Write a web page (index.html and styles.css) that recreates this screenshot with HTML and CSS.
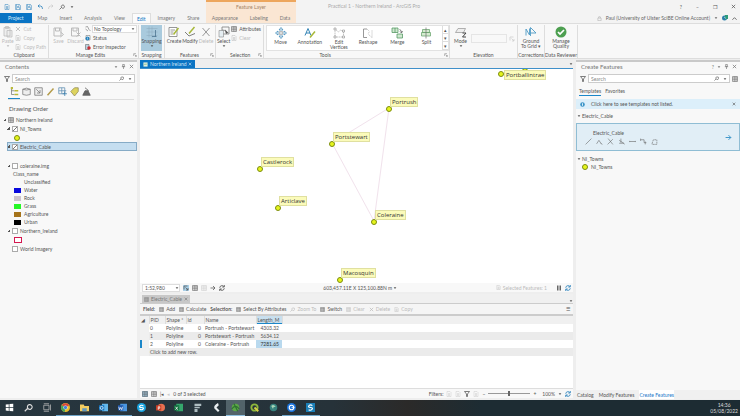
FILE: index.html
```html
<!DOCTYPE html>
<html lang="en">
<head>
    <meta charset="UTF-8">
    <meta name="viewport" content="width=device-width, initial-scale=1.0">
    <title>Practical 1 - Northern Ireland - ArcGIS Pro</title>
    <link rel="stylesheet" href="styles.css">
</head>
<body>

    <!-- Shared icons -->
    <svg class="defs">
        <symbol id="page" viewBox="0 0 12 12"><path d="M2 1h6l2 2v8H2zM4 5h4M4 7h4M4 9h4" fill="none" stroke="currentColor"/></symbol>
        <symbol id="disk" viewBox="0 0 12 12"><path d="M1 1h8l2 2v8H1zM3 1v4h5V1M3 11V7h6v4" fill="none" stroke="currentColor"/></symbol>
        <symbol id="grid" viewBox="0 0 12 12"><path d="M1 1h10v10H1zM1 4h10M1 7.500h10M4.500 1v10M8 1v10" fill="none" stroke="currentColor"/></symbol>
        <symbol id="filter" viewBox="0 0 12 12"><path d="M1 1h10L7 6v5H5V6z" fill="none" stroke="currentColor" stroke-width="1.500"/></symbol>
        <symbol id="lens" viewBox="0 0 12 12"><path d="M1 11l4-4M5 7a3.200 3.200 0 1 1 1 1z" fill="none" stroke="currentColor" stroke-width="1.500"/></symbol>
        <symbol id="refresh" viewBox="0 0 12 12"><path d="M1.500 5.500a4.500 4.500 0 0 1 8-2.500M10.500 6.500a4.500 4.500 0 0 1-8 2.500M10.500 0v4h-4M1.500 12V8h4" fill="none" stroke="currentColor" stroke-width="1.800"/></symbol>
        <symbol id="launch" viewBox="0 0 12 12"><path d="M2 9V2h7M5 5l5 5M10 6v4H6" fill="none" stroke="currentColor" stroke-width="1.500"/></symbol>
        <symbol id="cross" viewBox="0 0 12 12"><path d="M2 2l8 8M10 2l-8 8" stroke="currentColor" stroke-width="1.800"/></symbol>
        <symbol id="pin" viewBox="0 0 12 12"><path d="M4 1h4v5H4zM2 6.500h8M6 7v5" fill="none" stroke="currentColor" stroke-width="1.600"/></symbol>
        <symbol id="down" viewBox="0 0 12 12"><path d="M2 4h8l-4 5z" fill="currentColor"/></symbol>
        <symbol id="arrow" viewBox="0 0 12 12"><path d="M1 6h9M6 2l4 4-4 4" fill="none" stroke="currentColor" stroke-width="1.500"/></symbol>
    </svg>

    <div class="app">
        <header class="titlebar">
            <div class="quick">
                <svg class="icon blue"><use href="#page"/></svg>
                <svg class="icon blue"><use href="#disk"/></svg>
                <svg class="icon blue"><use href="#disk"/></svg>
                <svg class="icon blue" viewBox="0 0 12 12"><path d="M5 1L2 4l3 3M2 4h5q4 0 4 6" fill="none" stroke="currentColor" stroke-width="1.600"/></svg>
                <svg class="icon pale" viewBox="0 0 12 12"><path d="M7 1l3 3-3 3M10 4H5Q1 4 1 10" fill="none" stroke="currentColor" stroke-width="1.600"/></svg>
                <svg class="icon"><use href="#lens"/></svg>
                <svg class="tiny"><use href="#down"/></svg>
            </div>
            <div class="context">Feature Layer</div>
            <h1 class="title">Practical 1 - Northern Ireland - ArcGIS Pro</h1>
            <div class="window-buttons">
                <button>?</button>
                <button>–</button>
                <button>❐</button>
                <button aria-label="Close"><svg class="small"><use href="#cross"/></svg></button>
            </div>
        </header>

        <nav class="tabs">
            <div class="main-tabs">
                <button class="project">Project</button>
                <button>Map</button>
                <button>Insert</button>
                <button>Analysis</button>
                <button>View</button>
                <button class="current">Edit</button>
                <button>Imagery</button>
                <button>Share</button>
            </div>
            <div class="context-tabs">
                <button>Appearance</button>
                <button>Labeling</button>
                <button>Data</button>
            </div>
            <div class="account">
                <svg class="small" viewBox="0 0 12 12"><path d="M2 5h8v6H2zM4 5V2q2-2 4 0v3" fill="none" stroke="#999"/></svg>
                <span>Paul (University of Ulster SciBE Online Account)</span>
                <svg class="tiny"><use href="#down"/></svg>
                <svg class="icon" viewBox="0 0 12 12"><circle cx="5" cy="6" r="5" fill="#2a7fa8"/><path d="M6 0h6v8H6z" fill="#2c9b7a"/><path d="M4 4l4 3" stroke="#fff"/></svg>
                <svg class="small" viewBox="0 0 12 12"><path d="M1 9l5-5 5 5" fill="none" stroke="#555" stroke-width="2"/></svg>
            </div>
        </nav>

        <section class="ribbon">
            <div class="group clipboard">
                <div class="tools faded">
                    <button class="big">
                        <svg viewBox="0 0 24 24"><path d="M4 3h12v17H4zM7 1h6v4H7zM10 9h10v13H10z" fill="#eee" stroke="#bbb" stroke-width="1.500"/></svg>
                        Paste<svg class="tiny"><use href="#down"/></svg>
                    </button>
                    <div class="stack">
                        <button><svg class="icon"><use href="#cross"/></svg>Cut</button>
                        <button><svg class="icon"><use href="#page"/></svg>Copy</button>
                        <button><svg class="icon"><use href="#page"/></svg>Copy Path</button>
                    </div>
                </div>
                <div class="caption">Clipboard</div>
            </div>
            <div class="group manage">
                <div class="tools">
                    <button class="big faded">
                        <svg viewBox="0 0 24 24"><path d="M2 4h14v16H2zM5 4v6h8V4M15 12l6 5-6 5" fill="none" stroke="#bbb" stroke-width="2"/></svg>
                        Save
                    </button>
                    <button class="big faded">
                        <svg viewBox="0 0 24 24"><path d="M3 4h14v16H3zM6 4v6h8V4M13 13l8 8M21 13l-8 8" fill="none" stroke="#bbb" stroke-width="2"/></svg>
                        Discard
                    </button>
                    <div class="stack">
                        <div class="topology">
                            <svg class="icon" viewBox="0 0 12 12"><path d="M1 2l4-1 3 6 3 3M1 6l5 4" fill="none" stroke="#555"/></svg>
                            <div class="drop">
                                <select aria-label="Topology"><option>No Topology</option></select>
                                <svg class="tiny"><use href="#down"/></svg>
                            </div>
                        </div>
                        <button><svg class="icon" viewBox="0 0 12 12"><path d="M2 1h8v9H2z" fill="#fff" stroke="#666"/><circle cx="5" cy="7" r="4" fill="#2683bd"/><path d="M5 5v4" stroke="#fff"/></svg>Status</button>
                        <button><svg class="icon" viewBox="0 0 12 12"><path d="M1 1h7v10H1z" fill="#b9d2e0" stroke="#555"/><circle cx="8" cy="8" r="3.500" fill="#c62f35"/></svg>Error Inspector</button>
                    </div>
                </div>
                <div class="caption">Manage Edits<svg class="launch"><use href="#launch"/></svg></div>
            </div>
            <div class="group snap">
                <div class="tools">
                    <button class="big pressed">
                        <svg viewBox="0 0 24 24"><path d="M1 5h22M1 12h22M1 19h22M6 1v22M12 1v22" stroke="#8daabd"/><path d="M19 8v13M12 21h9" stroke="#476f8b" stroke-width="1.500"/></svg>
                        Snapping<svg class="tiny"><use href="#down"/></svg>
                    </button>
                </div>
                <div class="caption">Snapping</div>
            </div>
            <div class="group features">
                <div class="tools">
                    <button class="big">
                        <svg viewBox="0 0 24 24"><path d="M2 3h16v18H2zM5 8h9M5 12h6M5 16h5" fill="#fff" stroke="#777" stroke-width="1.500"/><path d="M11 17L21 4" stroke="#a7b83a" stroke-width="3"/></svg>
                        Create
                    </button>
                    <button class="big">
                        <svg viewBox="0 0 24 24"><path d="M2 12l8 8 12-5" fill="none" stroke="#555" stroke-width="1.500"/><path d="M10 15L21 2" stroke="#a7b83a" stroke-width="3"/></svg>
                        Modify
                    </button>
                    <button class="big faded">
                        <svg viewBox="0 0 24 24"><path d="M5 4l14 16M19 4L5 20" stroke="#999" stroke-width="2"/></svg>
                        Delete
                    </button>
                </div>
                <div class="caption">Features<svg class="launch"><use href="#launch"/></svg></div>
            </div>
            <div class="group selection">
                <div class="tools">
                    <button class="big">
                        <svg viewBox="0 0 24 24"><path d="M8 2h14v14H8zM8 8l7 1 2 7" fill="none" stroke="#777" stroke-width="1.500"/><path d="M2 9v13h9V9z" fill="#e6eef2" stroke="#777"/><path d="M14 7l7 7-5 1z" fill="#555"/></svg>
                        Select<svg class="tiny"><use href="#down"/></svg>
                    </button>
                    <div class="stack">
                        <button><svg class="icon"><use href="#grid"/></svg>Attributes</button>
                        <button class="faded"><svg class="icon"><use href="#page"/></svg>Clear</button>
                    </div>
                </div>
                <div class="caption">Selection<svg class="launch"><use href="#launch"/></svg></div>
            </div>
            <div class="group toolset">
                <div class="tools gallery">
                    <button class="big">
                        <svg viewBox="0 0 24 24"><path d="M12 1l4 5H8zM12 23l4-5H8zM1 12l5-4v8zM23 12l-5-4v8z" fill="#fff" stroke="#3384b5" stroke-width="1.500"/><path d="M9 9h6v6H9z" fill="#ddd" stroke="#888"/></svg>
                        Move
                    </button>
                    <button class="big">
                        <svg viewBox="0 0 24 24"><path d="M2 17L8 3l6 14M4 12h8" fill="none" stroke="#3384b5" stroke-width="2"/><path d="M12 21L22 9" stroke="#a7b83a" stroke-width="3"/></svg>
                        Annotation
                    </button>
                    <button class="big">
                        <svg viewBox="0 0 24 24"><path d="M4 4v16h17V9l-6-3-4 4-7-6" fill="none" stroke="#888" stroke-dasharray="3 1"/><path d="M2 2h4v4H2zM2 18h4v4H2zM19 18h4v4h-4zM19 6h4v4h-4z" fill="#fff" stroke="#777"/></svg>
                        Edit<br>Vertices
                    </button>
                    <button class="big">
                        <svg viewBox="0 0 24 24"><path d="M10 4H3v17h7" fill="none" stroke="#777" stroke-width="1.500"/><path d="M10 4l5 5-3 5 8 7M20 7v14" fill="none" stroke="#777" stroke-dasharray="2 2"/></svg>
                        Reshape
                    </button>
                    <button class="big">
                        <svg viewBox="0 0 24 24"><path d="M2 2h12v9H2zM8 2v9M12 14h11v8H12z" fill="#cfe8cf" stroke="#519560" stroke-width="1.500"/><path d="M17 5q4 1 4 6m-3-2l3 3 2-4" fill="none" stroke="#555" stroke-width="1.500"/></svg>
                        Merge
                    </button>
                    <button class="big">
                        <svg viewBox="0 0 24 24"><path d="M5 5h14v6H5zM3 11h18v7H3z" fill="#d5ebcf" stroke="#69a46e" stroke-width="1.500"/><path d="M12 1v22" stroke="#777" stroke-width="1.500"/></svg>
                        Split
                    </button>
                    <div class="scroller">
                        <button aria-label="Up">▴</button>
                        <button aria-label="Down">▾</button>
                        <button aria-label="More">▾</button>
                    </div>
                </div>
                <div class="caption">Tools<svg class="launch"><use href="#launch"/></svg></div>
            </div>
            <div class="group elevation">
                <div class="tools">
                    <button class="big">
                        <svg viewBox="0 0 24 24"><path d="M1 13L6 5h15l-4 8z" fill="#eee" stroke="#999" stroke-width="1.500"/><path d="M15 14h7l-7 8h7" fill="none" stroke="#444" stroke-width="2"/></svg>
                        Mode<svg class="tiny"><use href="#down"/></svg>
                    </button>
                    <select class="surface" aria-label="Elevation surface" disabled><option></option></select>
                    <svg class="icon pale"><use href="#launch"/></svg>
                </div>
                <div class="caption">Elevation</div>
            </div>
            <div class="group corrections">
                <div class="tools">
                    <button class="big">
                        <svg viewBox="0 0 24 24"><path d="M2 19V6l7 12V5M11 20V3l11 11H11" fill="none" stroke="#4f9bc5" stroke-width="1.800"/></svg>
                        Ground<br>To Grid ▾
                    </button>
                </div>
                <div class="caption">Corrections</div>
            </div>
            <div class="group reviewer">
                <div class="tools">
                    <button class="big">
                        <svg viewBox="0 0 24 24"><circle cx="12" cy="12" r="11" fill="#4d9f50"/><path d="M6 12l4 4 8-8" fill="none" stroke="#fff" stroke-width="3.500"/></svg>
                        Manage<br>Quality
                    </button>
                </div>
                <div class="caption">Data Reviewer</div>
            </div>
        </section>

        <main class="workspace">
            <aside class="pane contents">
                <div class="pane-head">
                    <h2>Contents</h2>
                    <svg class="tiny"><use href="#down"/></svg>
                    <svg class="small"><use href="#pin"/></svg>
                    <svg class="small"><use href="#cross"/></svg>
                </div>
                <div class="search">
                    <svg class="icon"><use href="#filter"/></svg>
                    <label class="field"><input type="text" placeholder="Search" aria-label="Search contents"><svg class="small"><use href="#lens"/></svg><svg class="tiny"><use href="#down"/></svg></label>
                </div>
                <div class="list-modes">
                    <button class="on" aria-label="Drawing order"><svg viewBox="0 0 12 12"><path d="M2 1v9h4M2 5h4" fill="none" stroke="#777"/><path d="M1 0h3v3H1zM6 4h5v2H6zM6 9h5v2H6z" fill="#b9b93a"/></svg></button>
                    <button aria-label="Source"><svg viewBox="0 0 12 12"><path d="M1 3v7q5 2 10 0V3M1 3q5-3 10 0-5 2-10 0" fill="#eee" stroke="#777"/></svg></button>
                    <button aria-label="Selection"><svg viewBox="0 0 12 12"><path d="M1 1h10v10H1zM3 3l5 5M8 4v4H4" fill="#eee" stroke="#777"/></svg></button>
                    <button aria-label="Editing"><svg viewBox="0 0 12 12"><path d="M2 11l8-9" stroke="#b49c4b" stroke-width="2"/></svg></button>
                    <button aria-label="Snapping"><svg viewBox="0 0 12 12"><path d="M1 1h8v8H1zM1 5h10M5 1v8" fill="none" stroke="#5d8db0"/><path d="M9 6v6M6 9h6" stroke="#3379aa"/></svg></button>
                    <button aria-label="Labeling"><svg viewBox="0 0 12 12"><path d="M1 6l5-5h5v5l-5 6z" fill="#ddd35e" stroke="#8f8a58"/></svg></button>
                    <button aria-label="Perspective"><svg viewBox="0 0 12 12"><path d="M1 11l3-6h4l3 6zM4 1l5 4" fill="#666" stroke="#555"/></svg></button>
                </div>
                <h3>Drawing Order</h3>
                <ul class="tree">
                    <li class="root"><i class="twist"></i><svg class="icon"><use href="#grid"/></svg>Northern Ireland</li>
                    <li><label><i class="twist"></i><input type="checkbox" checked>NI_Towns</label></li>
                    <li class="symbol"><i class="dot"></i></li>
                    <li class="selected"><label><i class="twist"></i><input type="checkbox" checked>Electric_Cable</label></li>
                    <li class="symbol blank"></li>
                    <li><label><i class="twist"></i><input type="checkbox">coleraine.img</label></li>
                    <li class="class-name">Class_name</li>
                    <li class="class"><i class="swatch"></i>Unclassified</li>
                    <li class="class"><i class="swatch water"></i>Water</li>
                    <li class="class"><i class="swatch rock"></i>Rock</li>
                    <li class="class"><i class="swatch grass"></i>Grass</li>
                    <li class="class"><i class="swatch agriculture"></i>Agriculture</li>
                    <li class="class"><i class="swatch urban"></i>Urban</li>
                    <li><label><i class="twist"></i><input type="checkbox">Northern_Ireland</label></li>
                    <li class="symbol"><i class="outline"></i></li>
                    <li><label><i class="twist none"></i><input type="checkbox">World Imagery</label></li>
                </ul>
            </aside>

            <div class="center">
                <section class="map-view">
                    <div class="view-tabs">
                        <button><svg class="small" viewBox="0 0 12 12"><path d="M1 1h10v10H1z" fill="#e3f0dc"/><path d="M2 8l3-4 2 3 3-4" fill="none" stroke="#4b9b6b"/></svg>Northern Ireland<svg class="tiny"><use href="#cross"/></svg></button>
                        <svg class="tiny"><use href="#down"/></svg>
                    </div>
                    <div class="map">
                        <svg class="cables"><path d="M249 39L192 74L234 152Z" fill="none" stroke="#f1e2ec"/></svg>
                        <div class="town bare"><i class="dot"></i></div>
                        <div class="town portballintrae"><i class="dot"></i><span>Portballintrae</span></div>
                        <div class="town portrush"><i class="dot"></i><span>Portrush</span></div>
                        <div class="town portstewart"><i class="dot"></i><span>Portstewart</span></div>
                        <div class="town castlerock"><i class="dot"></i><span>Castlerock</span></div>
                        <div class="town articlave"><i class="dot"></i><span>Articlave</span></div>
                        <div class="town coleraine"><i class="dot"></i><span>Coleraine</span></div>
                        <div class="town macosquin"><i class="dot"></i><span>Macosquin</span></div>
                    </div>
                    <div class="map-status">
                        <div class="drop">
                            <select aria-label="Map scale"><option>1:52,980</option></select>
                            <svg class="tiny"><use href="#down"/></svg>
                        </div>
                        <svg class="icon lit"><use href="#launch"/></svg>
                        <svg class="icon"><use href="#grid"/></svg>
                        <svg class="icon pale"><use href="#grid"/></svg>
                        <svg class="icon"><use href="#arrow"/></svg>
                        <svg class="icon"><use href="#refresh"/></svg>
                        <span class="coords">603,457.11E X 125,100.88N m <svg class="tiny"><use href="#down"/></svg></span>
                        <span class="selected-count"><svg class="small"><use href="#page"/></svg>Selected Features: 1</span>
                        <svg class="icon" viewBox="0 0 12 12"><path d="M2 1h3v10H2zM7 1h3v10H7z" fill="#666"/></svg>
                        <svg class="icon blue"><use href="#refresh"/></svg>
                    </div>
                </section>

                <section class="table-view">
                    <div class="table-tabs">
                        <button><svg class="small"><use href="#grid"/></svg>Electric_Cable<svg class="tiny"><use href="#cross"/></svg></button>
                        <svg class="tiny"><use href="#down"/></svg>
                    </div>
                    <div class="table-tools">
                        <b>Field:</b>
                        <button><svg class="small"><use href="#grid"/></svg>Add</button>
                        <button><svg class="small"><use href="#grid"/></svg>Calculate</button>
                        <b>Selection:</b>
                        <button><svg class="small"><use href="#grid"/></svg>Select By Attributes</button>
                        <button class="faded"><svg class="small"><use href="#lens"/></svg>Zoom To</button>
                        <button><svg class="small"><use href="#grid"/></svg>Switch</button>
                        <button class="faded"><svg class="small"><use href="#grid"/></svg>Clear</button>
                        <button class="faded"><svg class="small"><use href="#cross"/></svg>Delete</button>
                        <button class="faded"><svg class="small"><use href="#page"/></svg>Copy</button>
                        <button class="menu" aria-label="Menu">☰</button>
                    </div>
                    <table>
                        <thead>
                            <tr>
                                <th class="c-mark">◢</th>
                                <th class="c-pid">PID</th>
                                <th class="c-shape">Shape *</th>
                                <th class="c-id">Id</th>
                                <th class="c-name">Name</th>
                                <th class="c-length">Length_M</th>
                                <th></th>
                            </tr>
                        </thead>
                        <tbody>
                            <tr><td></td><td>0</td><td>Polyline</td><td class="num">0</td><td>Portrush - Portstewart</td><td class="num">4303.32</td><td></td></tr>
                            <tr><td></td><td>1</td><td>Polyline</td><td class="num">0</td><td>Portstewart - Portrush</td><td class="num">5634.12</td><td></td></tr>
                            <tr class="active"><td></td><td>2</td><td>Polyline</td><td class="num">0</td><td>Coleraine - Portrush</td><td class="num">7281.65</td><td></td></tr>
                            <tr><td></td><td colspan="6">Click to add new row.</td></tr>
                        </tbody>
                    </table>
                    <div class="table-status">
                        <svg class="icon lit"><use href="#grid"/></svg>
                        <svg class="icon"><use href="#grid"/></svg>
                        <span class="nav">|◂</span>
                        <span class="nav pale">◂</span>
                        <span>0 of 3 selected</span>
                        <span class="filters">Filters:</span>
                        <svg class="icon pale"><use href="#page"/></svg>
                        <svg class="icon pale"><use href="#page"/></svg>
                        <svg class="icon"><use href="#filter"/></svg>
                        <svg class="icon pale"><use href="#page"/></svg>
                        <span>−</span>
                        <input type="range" aria-label="Zoom">
                        <span>+</span>
                        <span class="percent">100%</span>
                        <svg class="tiny"><use href="#down"/></svg>
                        <svg class="icon blue"><use href="#refresh"/></svg>
                    </div>
                </section>
            </div>

            <aside class="pane create">
                <div class="pane-head">
                    <h2>Create Features</h2>
                    <span>?</span>
                    <svg class="tiny"><use href="#down"/></svg>
                    <svg class="small"><use href="#pin"/></svg>
                    <svg class="small"><use href="#cross"/></svg>
                </div>
                <div class="search">
                    <svg class="icon"><use href="#filter"/></svg>
                    <label class="field"><input type="text" placeholder="Search" aria-label="Search templates"><svg class="small"><use href="#lens"/></svg><svg class="tiny"><use href="#down"/></svg></label>
                    <svg class="icon"><use href="#grid"/></svg>
                </div>
                <div class="pane-tabs">
                    <button class="on">Templates</button>
                    <button>Favorites</button>
                </div>
                <div class="notice">
                    <svg class="small" viewBox="0 0 12 12"><circle cx="6" cy="6" r="5.500" fill="#3b95c8"/><path d="M6 3v6" stroke="#fff" stroke-width="2"/></svg>
                    <a href="#">Click here to see templates not listed.</a>
                    <svg class="tiny"><use href="#cross"/></svg>
                </div>
                <div class="heading"><svg class="tiny"><use href="#down"/></svg>Electric_Cable</div>
                <div class="template">
                    <div class="template-body">
                        <div class="template-name">Electric_Cable</div>
                        <div class="template-tools">
                            <button aria-label="Line"><svg viewBox="0 0 12 12"><path d="M1 11L11 1"/></svg></button>
                            <button aria-label="Trace"><svg viewBox="0 0 12 12"><path d="M1 10l4-6 4 6M8 9l3 2"/></svg></button>
                            <button aria-label="Split"><svg viewBox="0 0 12 12"><path d="M2 1l8 10M10 2L1 11"/></svg></button>
                            <button aria-label="Radial"><svg viewBox="0 0 12 12"><path d="M5 1v7M2 4l8 5M2 9h8l1 2"/></svg></button>
                            <button aria-label="Two-point line"><svg viewBox="0 0 12 12"><path d="M1 6h10M1 5v2M11 5v2"/></svg></button>
                            <button aria-label="Right angle"><svg viewBox="0 0 12 12"><path d="M1 3h6v5h4M1 1v4M9 6v5"/></svg></button>
                            <button aria-label="Polygon"><svg viewBox="0 0 12 12"><path d="M2 9l2-6h6v8H2z" stroke-dasharray="3 1"/></svg></button>
                        </div>
                    </div>
                    <button class="go" aria-label="Open template"><svg><use href="#arrow"/></svg></button>
                </div>
                <div class="heading"><svg class="tiny"><use href="#down"/></svg>NI_Towns</div>
                <div class="point-template"><i class="dot"></i>NI_Towns</div>
                <div class="dock-tabs">
                    <button>Catalog</button>
                    <button>Modify Features</button>
                    <button class="on">Create Features</button>
                </div>
            </aside>
        </main>

        <footer class="taskbar">
            <div class="apps">
                <div><svg viewBox="0 0 12 12"><path d="M1 2l4-.5v4H1zM6 1.300L11 1v4.500H6zM1 6.500h4v4L1 10zM6 6.500h5V11l-5-.5z" fill="#fff"/></svg></div>
                <div><svg><use href="#lens"/></svg></div>
                <div><svg viewBox="0 0 12 12"><path d="M1 3h7v6H1zM10 2v8M1 1h7M1 11h7" fill="none" stroke="#bbb"/></svg></div>
                <div class="open"><svg viewBox="0 0 12 12"><circle cx="6" cy="6" r="6" fill="#e7bc2d"/><path d="M6 6L1 3a6 6 0 0 1 10 0z" fill="#d9463c"/><path d="M6 6L1 3a6 6 0 0 0 4 9z" fill="#45a35b"/><circle cx="6" cy="6" r="2.800" fill="#fff"/><circle cx="6" cy="6" r="2.200" fill="#4580d8"/></svg></div>
                <div class="open"><svg viewBox="0 0 12 12"><path d="M0 2h5l1 2h6v7H0z" fill="#f2cc60"/><path d="M3 7h6v4H3z" fill="#6097bd"/></svg></div>
                <div class="open"><svg viewBox="0 0 12 12"><path d="M4 1h8v10H4z" fill="#64b7ea"/><path d="M0 3h7v7H0z" fill="#1372bd"/><circle cx="3.500" cy="6.500" r="2" fill="none" stroke="#fff"/></svg></div>
                <div class="open"><svg viewBox="0 0 12 12"><path d="M3 1h9v10H3z" fill="#4b96df"/><path d="M0 3h7v7H0z" fill="#1d57ac"/><path d="M1 5l1 4 1.500-3L5 9l1-4" fill="none" stroke="#fff"/></svg></div>
                <div><svg viewBox="0 0 12 12"><circle cx="6" cy="6" r="6" fill="#18a4e0"/><path d="M8.500 4Q6 2 4 4t2 2 2 2-4.500 0" fill="none" stroke="#fff" stroke-width="1.500"/></svg></div>
                <div><svg viewBox="0 0 12 12"><circle cx="7" cy="6" r="5" fill="#e97050"/><path d="M0 3h7v7H0z" fill="#c73e26"/><path d="M3 9V5h2v2H3" fill="none" stroke="#fff"/></svg></div>
                <div><svg viewBox="0 0 12 12"><path d="M3 1h9v10H3z" fill="#35a66c"/><path d="M0 3h7v7H0z" fill="#12703f"/><path d="M2 5l3 4M5 5L2 9" stroke="#fff"/></svg></div>
                <div><svg viewBox="0 0 12 12"><path d="M2 1h9v3H2zM2 5h7v2H2zM2 8h4v4H2z" fill="#aebdc1"/></svg></div>
                <div><svg viewBox="0 0 12 12"><path d="M8 0Q2 3 3 7l5 5 2-2-4-4 3-3z" fill="#e9eef0"/></svg></div>
                <div class="active"><svg viewBox="0 0 12 12"><circle cx="6" cy="6" r="5" fill="#5aa846"/><path d="M1 8q5-7 10 0M4 1l5 10" fill="none" stroke="#2d6f31" stroke-width="1.500"/></svg></div>
                <div><svg viewBox="0 0 12 12"><circle cx="6" cy="6" r="4.200" fill="none" stroke="#8db73c" stroke-width="2.500"/><path d="M6 6l5 5" stroke="#d8cf45" stroke-width="2.500"/></svg></div>
                <div><svg viewBox="0 0 12 12"><circle cx="6" cy="6" r="5" fill="#36817d"/><path d="M3 4q3-3 6 1-5 0-3 4" fill="#a8d4b8"/></svg></div>
                <div class="open"><svg viewBox="0 0 12 12"><circle cx="6" cy="6" r="6" fill="#1c75dd"/><circle cx="6" cy="6" r="3" fill="none" stroke="#fff" stroke-width="1.500"/><path d="M6 6h4" stroke="#fff"/></svg></div>
                <div class="open"><svg viewBox="0 0 12 12"><path d="M0 0h12v12H0z" fill="#1b7fb7"/><path d="M8.500 3.500Q6 1.500 4 3.500T6 6t2 2.500-4.500.5" fill="none" stroke="#fff" stroke-width="1.500"/></svg></div>
            </div>
            <div class="clock"><span>14:36</span><span>05/08/2022</span></div>
        </footer>
    </div>

</body>
</html>
```
FILE: styles.css
```css
* {
    box-sizing: border-box;
}
body {
    margin: 0;
    font-family: Lato, "Open Sans", sans-serif;
    font-size: 5px;
    line-height: 6px;
    color: #555;
    background: #eee;
}
h1, h2, h3, ul {
    margin: 0;
    padding: 0;
    font-weight: normal;
}
button, input, select {
    margin: 0;
    padding: 0;
    border: none;
    background: none;
    font: inherit;
    color: inherit;
    min-width: 0;
    appearance: none;
}
button {
    display: flex;
    align-items: center;
    gap: 2px;
    white-space: nowrap;
}
svg {
    flex: none;
}
.defs {
    display: none;
}
.icon {
    width: 6px;
    height: 6px;
}
.small {
    width: 5px;
    height: 5px;
}
.tiny {
    width: 4px;
    height: 4px;
}
.blue {
    color: #2e83bd;
}
.pale {
    color: #ccc;
}
.faded {
    color: #bbb;
}
.lit {
    background: #a9d0e8;
}
.dot {
    display: block;
    width: 6px;
    height: 6px;
    border: 1px solid #7c8c10;
    border-radius: 50%;
    background: #e6f51c;
}
.drop {
    display: grid;
    align-items: center;
}
.drop > * {
    grid-area: 1 / 1;
}
.drop svg {
    justify-self: end;
    margin-right: 1px;
    pointer-events: none;
}
.app {
    display: flex;
    flex-direction: column;
    height: 100vh;
}

/* Title bar and ribbon tabs */
.titlebar {
    display: flex;
    height: 13px;
    background: #f3f3f3;
}
.quick {
    display: flex;
    align-items: center;
    gap: 5px;
    width: 206px;
    padding-left: 4px;
}
.context {
    width: 90px;
    padding-top: 2px;
    border-top: 2px solid #eda65d;
    background: #fae6d3;
    text-align: center;
    color: #a38163;
}
.title {
    flex: 1;
    padding: 3px 0 0 32px;
    font-size: 5px;
    color: #aaa;
}
.window-buttons {
    display: flex;
    align-items: center;
    gap: 14px;
    padding-right: 4px;
}
.tabs {
    display: flex;
    height: 10px;
    background: #f3f3f3;
    color: #777;
}
.main-tabs {
    display: flex;
    width: 206px;
}
.tabs button {
    padding: 0 6px;
}
.tabs .project {
    padding: 0 8px;
    background: #0a74c4;
    color: #d9ecfa;
}
.tabs .current {
    padding: 0 4px;
    margin: 0 1px;
    border: 1px solid #ddd;
    border-bottom: none;
    background: #fbfbfb;
    color: #0a74c4;
}
.context-tabs {
    display: flex;
    width: 90px;
    background: #fae6d3;
}
.context-tabs button {
    flex: 1 1 auto;
    justify-content: center;
    padding: 0 2px;
}
.account {
    display: flex;
    align-items: center;
    gap: 4px;
    margin-left: auto;
    padding-right: 3px;
    color: #666;
}

/* Ribbon */
.ribbon {
    display: flex;
    height: 36px;
    padding-top: 1px;
    border-top: 1px solid #ddd;
    border-bottom: 1px solid #ddd;
    background: #f8f8f8;
}
.group {
    display: flex;
    flex-direction: column;
    border-right: 1px solid #ddd;
}
.tools {
    display: flex;
    flex: 1;
    gap: 2px;
    padding: 0 2px;
}
.caption {
    display: flex;
    justify-content: center;
    align-items: center;
    height: 7px;
    white-space: nowrap;
}
.launch {
    width: 4px;
    height: 4px;
    margin-left: auto;
    margin-right: 1px;
    color: #777;
}
.caption:has(.launch) {
    padding-left: 30%;
}
.big {
    flex-direction: column;
    flex: 1;
    gap: 0;
    line-height: 5px;
}
.big > svg:first-child {
    width: 12px;
    height: 12px;
    margin: 1px 0;
}
.stack {
    display: flex;
    flex-direction: column;
    gap: 3px;
    padding-top: 1px;
}
.clipboard {
    width: 49px;
}
.manage {
    width: 90px;
}
.snap {
    width: 26px;
}
.features {
    width: 51px;
}
.selection {
    width: 48px;
}
.toolset {
    width: 186px;
}
.elevation {
    width: 68px;
}
.corrections {
    width: 27px;
}
.reviewer {
    width: 33px;
}
.snap .tools, .corrections .tools, .reviewer .tools {
    padding: 0;
}
.pressed {
    margin: 0 2px;
    background: #a9cadd;
}
.topology {
    display: flex;
    gap: 2px;
}
.topology select {
    width: 43px;
    height: 6px;
    padding-left: 1px;
    background: #fff;
    outline: 1px solid #ddd;
}
.gallery {
    margin-left: 2px;
    padding: 0;
    border: 1px solid #e2e2e2;
    background: #fff;
}
.gallery .big {
    flex: 1 1 0;
}
.scroller {
    display: flex;
    flex-direction: column;
    width: 6px;
    border-left: 1px solid #ddd;
}
.scroller button {
    flex: 1;
    justify-content: center;
    border-bottom: 1px solid #ddd;
}
.elevation .big {
    flex: none;
    width: 17px;
}
.surface {
    flex: 1;
    height: 9px;
    margin-top: 9px;
    border: 1px solid #ddd;
}
.surface + .icon {
    margin-top: 11px;
}

/* Docked panes */
.workspace {
    display: flex;
    flex: 1;
    min-height: 0;
    gap: 3px;
    padding-top: 1px;
}
.pane {
    display: flex;
    flex-direction: column;
    border-top: 2px solid #c9c9c9;
    background: #f8f8f8;
}
.contents {
    width: 137px;
    margin-bottom: 2px;
}
.pane-head {
    display: flex;
    align-items: center;
    gap: 3px;
    height: 9px;
    padding: 0 3px 0 5px;
    color: #777;
}
.pane-head h2 {
    flex: 1;
    font-size: 6px;
}
.search {
    display: flex;
    align-items: center;
    gap: 2px;
    margin-top: 3px;
    padding: 0 2px 0 4px;
}
.field {
    display: flex;
    align-items: center;
    flex: 1;
    gap: 4px;
    height: 9px;
    padding: 0 2px;
    border: 1px solid #ccc;
    background: #fff;
}
.field input {
    flex: 1;
}
.field input::placeholder {
    color: #888;
}
.list-modes {
    display: flex;
    margin: 2px 3px 0 8px;
    border-bottom: 1px solid #ddd;
}
.list-modes button {
    justify-content: center;
    width: 12px;
    height: 14px;
    border-bottom: 1px solid transparent;
}
.list-modes .on {
    border-bottom-color: #1b87c9;
}
.list-modes svg {
    width: 9px;
    height: 9px;
}
.contents h3 {
    padding: 6px 0 3px 9px;
    font-size: 6px;
}
.tree {
    list-style: none;
}
.tree li, .tree label {
    display: flex;
    align-items: center;
    gap: 2px;
    height: 9px;
}
.tree li {
    padding-left: 7px;
}
.tree .root {
    padding-left: 3px;
}
.tree .symbol {
    padding-left: 14px;
}
.tree .blank {
    height: 10px;
}
.tree .class-name {
    height: 8px;
    padding-left: 13px;
}
.tree .class {
    height: 8px;
    gap: 3px;
    padding-left: 14px;
}
.tree .selected {
    margin-left: 7px;
    padding-left: 0;
    background: #c5def0;
    outline: 1px solid #86abc6;
    outline-offset: -1px;
}
.tree input {
    width: 6px;
    height: 6px;
    border: 1px solid #aaa;
    background: #fff;
}
.tree input:checked {
    background: linear-gradient(135deg, #fff 45%, #777 45%, #777 60%, #fff 60%);
}
.twist {
    width: 3px;
    height: 3px;
    background: linear-gradient(135deg, transparent 50%, #555 50%);
}
.none {
    background: none;
}
.swatch {
    width: 7px;
    height: 5px;
}
.water {
    background: #0808dd;
}
.rock {
    background: #ccc3cc;
}
.grass {
    background: #26f726;
}
.agriculture {
    background: #a5731a;
}
.urban {
    background: #000;
}
.outline {
    width: 8px;
    height: 6px;
    border: 1px solid #d41850;
    background: #fff;
}

/* Map */
.center {
    display: flex;
    flex-direction: column;
    flex: 1;
    min-width: 0;
}
.map-view {
    display: flex;
    flex-direction: column;
    flex: 1;
}
.view-tabs {
    display: flex;
    justify-content: space-between;
    align-items: center;
    height: 9px;
    border-bottom: 1px solid #3f8fc9;
}
.view-tabs button {
    height: 8px;
    padding: 0 3px;
    background: #0a74c4;
    color: #cde5f7;
}
.map {
    position: relative;
    flex: 1;
    overflow: hidden;
    background: #fff;
}
.cables {
    position: absolute;
    width: 100%;
    height: 100%;
}
.town {
    position: absolute;
}
.town .dot {
    position: absolute;
    left: -3px;
    top: -3px;
}
.town span {
    position: absolute;
    left: 1px;
    bottom: 2px;
    padding: 0 1px;
    border: 1px solid #e0e0a0;
    background: #fbfbba;
    font-family: "Open Sans", sans-serif;
    font-size: 6px;
    line-height: 8px;
    color: #333;
}
.bare {
    left: 385px;
    top: -1px;
}
.portballintrae {
    left: 361px;
    top: 5px;
}
.portballintrae span {
    left: 3px;
    bottom: -6px;
}
.portrush {
    left: 249px;
    top: 40px;
}
.portstewart {
    left: 192px;
    top: 75px;
}
.castlerock {
    left: 120px;
    top: 100px;
}
.articlave {
    left: 138px;
    top: 139px;
}
.coleraine {
    left: 234px;
    top: 153px;
}
.macosquin {
    left: 200px;
    top: 211px;
}
.map-status, .table-status {
    display: flex;
    align-items: center;
    gap: 3px;
    height: 9px;
    padding: 0 2px;
    background: #f8f8f8;
}
.map-status select {
    width: 38px;
    height: 8px;
    padding-left: 2px;
    border: 1px solid #ddd;
    background: #fff;
}
.coords {
    flex: 1;
    text-align: center;
}
.selected-count {
    display: flex;
    gap: 2px;
    margin-right: 6px;
    color: #bbb;
}

/* Attribute table */
.table-view {
    display: flex;
    flex-direction: column;
    height: 104px;
    margin-top: 2px;
    margin-bottom: 2px;
    background: #fff;
}
.table-tabs {
    display: flex;
    justify-content: space-between;
    align-items: end;
    height: 10px;
    border-bottom: 1px solid #ccc;
    background: #f0f0f0;
}
.table-tabs button {
    height: 8px;
    margin-left: 2px;
    padding: 0 2px;
    background: #c8c8c8;
    color: #777;
}
.table-tools {
    display: flex;
    align-items: center;
    gap: 4px;
    height: 12px;
    padding: 0 3px;
    border-bottom: 2px solid #ccc;
    background: #f5f5f5;
}
.table-tools .menu {
    margin-left: auto;
}
table {
    width: 100%;
    border-collapse: collapse;
    table-layout: fixed;
}
th, td {
    height: 8px;
    padding: 0 1px;
    font-weight: normal;
    line-height: 6px;
    text-align: left;
    white-space: nowrap;
}
th {
    border-right: 1px solid #ddd;
    background: #f0f0f0;
}
th:last-child {
    border: none;
}
tbody tr:nth-child(even) {
    background: #ebebeb;
}
td:first-child {
    background: #f0f0f0;
}
.c-mark {
    width: 9px;
}
.c-pid {
    width: 16px;
}
.c-shape {
    width: 21px;
}
.c-id {
    width: 18px;
}
.c-name {
    width: 52px;
}
.c-length {
    width: 26px;
    background: #c8dfee;
    box-shadow: inset 0 -1px #1b87c9;
}
.num {
    padding-right: 3px;
    text-align: right;
}
.active td:first-child {
    box-shadow: inset 2px 0 #1b87c9;
}
.active .num:nth-child(6) {
    background: #b9d9ee;
    color: #333;
}
.table-status {
    height: 10px;
    margin-top: auto;
    border-top: 1px solid #ddd;
}
.filters {
    margin-left: auto;
}
.table-status input {
    width: 42px;
    height: 6px;
    background: linear-gradient(#999, #999) center / 100% 1px no-repeat;
}
.table-status input::-webkit-slider-thumb {
    appearance: none;
    width: 2px;
    height: 5px;
    background: #666;
}
.percent {
    margin-left: 3px;
}

/* Create Features */
.create {
    width: 164px;
    margin-bottom: 1px;
}
.pane-tabs {
    display: flex;
    gap: 4px;
    padding: 4px 3px 3px;
}
.pane-tabs button {
    height: 9px;
    border-bottom: 1px solid transparent;
}
.pane-tabs .on {
    border-bottom-color: #1b87c9;
}
.notice {
    display: flex;
    align-items: center;
    gap: 6px;
    height: 10px;
    padding: 0 4px;
    background: #dceffa;
}
.notice a {
    flex: 1;
    color: #555;
    text-decoration: none;
}
.heading {
    display: flex;
    align-items: center;
    gap: 1px;
    height: 14px;
    padding-left: 1px;
}
.template {
    display: flex;
    align-items: center;
    justify-content: space-between;
    height: 28px;
    padding: 0 7px 0 8px;
    border: 1px solid #8fbdd4;
    background: #e1eef6;
}
.template-name {
    padding-left: 8px;
}
.template-tools {
    display: flex;
    gap: 4px;
    padding-top: 2px;
}
.template-tools svg {
    width: 7px;
    height: 7px;
    fill: none;
    stroke: #666;
}
.go svg {
    width: 7px;
    height: 7px;
    color: #2b8cc4;
}
.template + .heading {
    margin-top: 3px;
    height: 10px;
}
.point-template {
    display: flex;
    align-items: center;
    gap: 3px;
    padding-left: 6px;
}
.dock-tabs {
    display: flex;
    gap: 5px;
    height: 9px;
    margin-top: auto;
    padding-left: 1px;
    background: #f0f0f0;
}
.dock-tabs .on {
    background: #fff;
    color: #1b77c9;
}

/* Windows taskbar */
.taskbar {
    display: flex;
    justify-content: space-between;
    height: 16px;
    background: linear-gradient(90deg, #27363f, #263239 45%, #2b2a29 55%, #1d2c33 65%);
    color: #ddd;
}
.apps {
    display: flex;
    width: 320px;
}
.apps div {
    display: flex;
    flex: 1;
    align-items: center;
    justify-content: center;
    border-bottom: 1px solid transparent;
}
.apps .open {
    border-bottom-color: #6fa5c9;
}
.apps .active {
    background: #52636a;
    border-bottom-color: #8fc0e0;
}
.apps svg {
    width: 9px;
    height: 9px;
}
.clock {
    display: flex;
    flex-direction: column;
    justify-content: center;
    padding-right: 2px;
    text-align: center;
}
```
